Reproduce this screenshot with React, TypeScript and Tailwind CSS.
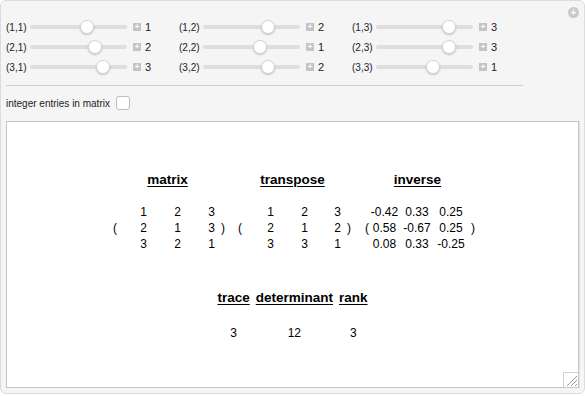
import React from "react";

const entries = [
  [
    { label: "(1,1)", v: 1 },
    { label: "(2,1)", v: 2 },
    { label: "(3,1)", v: 3 },
  ],
  [
    { label: "(1,2)", v: 2 },
    { label: "(2,2)", v: 1 },
    { label: "(3,2)", v: 2 },
  ],
  [
    { label: "(1,3)", v: 3 },
    { label: "(2,3)", v: 3 },
    { label: "(3,3)", v: 1 },
  ],
];

function SliderRow({ label, v }: { label: string; v: number }) {
  const left = 7 + ((v + 5) / 10) * 83;
  return (
    <div className="flex h-[20px] items-center">
      <span className="w-[24px] text-[10px] text-[#222]">{label}</span>
      <div className="relative h-[20px] w-[97px]">
        <div className="absolute left-0 right-0 top-[8px] h-[4px] rounded-full bg-[#dedede]" />
        <div
          className="absolute top-[3px] h-[14px] w-[14px] -translate-x-1/2 rounded-full border border-[#d4d4d4] bg-white shadow-[0_1px_2px_rgba(0,0,0,0.2)]"
          style={{ left }}
        />
      </div>
      <span className="ml-[6px] flex h-[8px] w-[8px] items-center justify-center bg-[#c4c4c4] text-[8px] font-bold leading-none text-white">
        +
      </span>
      <span className="ml-[4px] text-[11px] text-[#222]">{v}</span>
    </div>
  );
}

function Matrix({
  rows,
  open,
  close,
  c1,
  c2,
  c3,
}: {
  rows: string[][];
  open: string;
  close: string;
  c1: string;
  c2: string;
  c3: string;
}) {
  return (
    <div className="flex items-center text-[12px] leading-[16px]">
      <span className={open}>(</span>
      <div className="flex flex-col">
        {rows.map((r, i) => (
          <div key={i} className="flex">
            <span className={c1}>{r[0]}</span>
            <span className={c2}>{r[1]}</span>
            <span className={c3}>{r[2]}</span>
          </div>
        ))}
      </div>
      <span className={close}>)</span>
    </div>
  );
}

function Block({ title, children }: { title: string; children: React.ReactNode }) {
  return (
    <div className="flex w-[125px] flex-col">
      <div className="text-center text-[13.5px] font-bold leading-[16px] underline underline-offset-2">
        {title}
      </div>
      <div className="mt-[16px]">{children}</div>
    </div>
  );
}

export default function App() {
  return (
    <div className="h-[396px] w-[585px] bg-white" style={{ fontFamily: '"Liberation Sans", Arial, sans-serif' }}>
      <div className="relative h-[394px] w-[585px] rounded-[6px] border border-[#dcdcdc] bg-[#f5f5f5] pl-[5px] pt-[16px]">
        <div className="absolute right-[5px] top-[6px] flex h-[11px] w-[11px] items-center justify-center rounded-full bg-[#c8c8c8] text-[10px] font-bold leading-none text-white">
          +
        </div>

        <div className="flex">
          {entries.map((col, i) => (
            <div key={i} className="flex w-[173px] flex-col">
              {col.map((e) => (
                <SliderRow key={e.label} label={e.label} v={e.v} />
              ))}
            </div>
          ))}
        </div>

        <div className="mt-[8px] w-[517px] border-t border-[#cfcfcf]" />

        <div className="mt-[9px] flex h-[16px] items-center">
          <span className="text-[10px] text-[#222]">integer entries in matrix</span>
          <span className="ml-[6px] h-[14px] w-[14px] rounded-[3px] border border-[#bdbdbd] bg-white" />
        </div>

        <div className="relative mt-[10px] flex h-[267px] w-[573px] flex-col items-center border border-[#c6c6c6] bg-white pt-[50px] text-black shadow-[1px_0_0_#e2e2e2]">
          <div className="flex">
            <Block title="matrix">
              <Matrix
                rows={[
                  ["1", "2", "3"],
                  ["2", "1", "3"],
                  ["3", "2", "1"],
                ]}
                open="ml-[8px]"
                close="ml-[6px]"
                c1="w-[30px] text-right"
                c2="w-[34px] text-right"
                c3="w-[34px] text-right"
              />
            </Block>
            <Block title="transpose">
              <Matrix
                rows={[
                  ["1", "2", "3"],
                  ["2", "1", "2"],
                  ["3", "3", "1"],
                ]}
                open="ml-[8px]"
                close="ml-[6px]"
                c1="w-[32px] text-right"
                c2="w-[34px] text-right"
                c3="w-[33px] text-right"
              />
            </Block>
            <Block title="inverse">
              <Matrix
                rows={[
                  ["-0.42", "0.33", "0.25"],
                  ["0.58", "-0.67", "0.25"],
                  ["0.08", "0.33", "-0.25"],
                ]}
                open="ml-[10px]"
                close="ml-[3px]"
                c1="w-[31px] text-center"
                c2="w-[34px] text-center"
                c3="w-[34px] text-center"
              />
            </Block>
          </div>

          <div className="mt-[38px] grid grid-cols-[auto_auto_auto] gap-x-[6px] text-center">
            <span className="text-[13.5px] font-bold leading-[16px] underline underline-offset-2">trace</span>
            <span className="text-[13.5px] font-bold leading-[16px] underline underline-offset-2">determinant</span>
            <span className="text-[13.5px] font-bold leading-[16px] underline underline-offset-2">rank</span>
            <span className="mt-[19px] text-[12px] leading-[16px]">3</span>
            <span className="mt-[19px] text-[12px] leading-[16px]">12</span>
            <span className="mt-[19px] text-[12px] leading-[16px]">3</span>
          </div>

          <svg className="absolute bottom-0 right-0" width="15" height="15" viewBox="0 0 15 15">
            <path d="M0.5 15 V0.5 H15" fill="none" stroke="#d0d0d0" />
            <path d="M4 14 L14 4 M8 14 L14 8 M12 14 L14 12" stroke="#9a9a9a" strokeWidth="1" />
          </svg>
        </div>
      </div>
    </div>
  );
}
